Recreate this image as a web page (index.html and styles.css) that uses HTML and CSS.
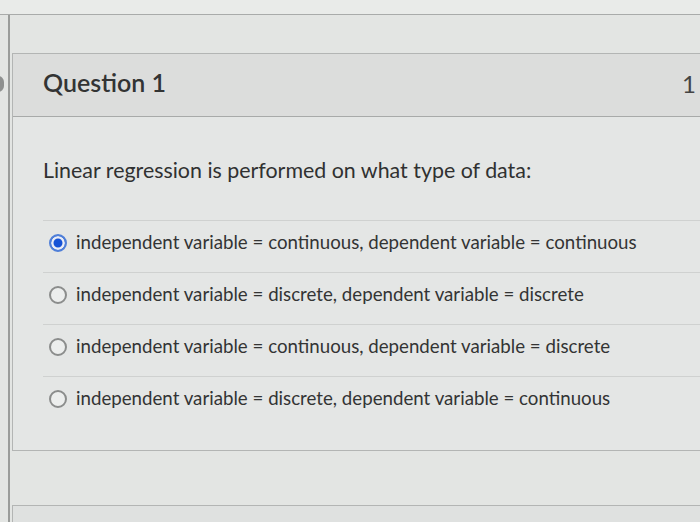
FILE: index.html
```html
<!DOCTYPE html>
<html>
<head>
<meta charset="utf-8">
<link rel="stylesheet" href="styles.css">
</head>
<body>
<div class="page">
  <div class="topbar"></div>
  <div class="card">
    <div class="card-head">
      <span class="chev"></span>
      <h2 class="title">Question 1</h2>
      <span class="pts">1</span>
    </div>
    <div class="card-body">
      <p class="question">Linear regression is performed on what type of data:</p>
      <ul class="answers">
        <li class="answer"><span class="radio checked"></span><span class="label">independent variable = continuous, dependent variable = continuous</span></li>
        <li class="answer"><span class="radio"></span><span class="label">independent variable = discrete, dependent variable = discrete</span></li>
        <li class="answer"><span class="radio"></span><span class="label">independent variable = continuous, dependent variable = discrete</span></li>
        <li class="answer"><span class="radio"></span><span class="label">independent variable = discrete, dependent variable = continuous</span></li>
      </ul>
    </div>
  </div>
  <div class="card next"></div>
</div>
</body>
</html>
```
FILE: styles.css
```css
html, body { margin: 0; padding: 0; }
body {
  width: 700px;
  height: 522px;
  overflow: hidden;
  background: #e3e5e3;
  font-family: Lato, "Noto Sans", sans-serif;
  color: #2e2f2f;
}
.page {
  height: 522px;
  border-left: 2px solid #9a9c9a;
  margin-left: 8px;
  box-sizing: border-box;
}
.topbar {
  height: 14px;
  background: #e9ebe9;
  border-bottom: 1px solid #a9abaa;
  margin-left: -10px;
}
.card {
  margin-top: 38px;
  margin-left: 2px;
  border: 1px solid #b3b5b4;
  border-right: none;
  background: #e4e6e5;
}
.card-head {
  height: 62px;
  background: #dcdddc;
  border-bottom: 1px solid #a8aaa9;
  display: flex;
  align-items: center;
  position: relative;
}
.chev {
  position: absolute;
  left: -15px;
  top: 22px;
  width: 6px;
  height: 16px;
  border-radius: 0 8px 8px 0;
  background: #8e908f;
}
.title {
  margin: 0 0 0 30px;
  font-size: 25px;
  font-weight: 600;
  color: #333434;
  flex: 1;
  position: relative;
  top: -3px;
}
.pts {
  font-size: 24px;
  color: #444;
  margin-right: 4px;
  position: relative;
  top: -2px;
}
.card-body {
  padding: 40px 0 22px 30px;
}
.question {
  margin: 0 0 37px 0;
  font-size: 21.4px;
  color: #303131;
}
.answers {
  list-style: none;
  margin: 0;
  padding: 0;
}
.answer {
  border-top: 1px solid #cfd1d0;
  display: flex;
  align-items: flex-start;
  padding-left: 6px;
  padding-top: 10px;
  box-sizing: border-box;
  height: 52px;
}
.radio {
  width: 14px;
  height: 14px;
  border: 2px solid #8b8d8c;
  border-radius: 50%;
  margin-right: 9px;
  flex: none;
  background: #eceeed;
  position: relative;
  top: 3px;
}
.radio.checked {
  border-color: #4f7fd8;
  background: #1552d6;
  box-shadow: inset 0 0 0 2.5px #e9ecf5;
}
.label {
  font-size: 18.7px;
  color: #333434;
}
.next {
  margin-top: 54px;
  height: 40px;
  background: #dfe1e0;
}
```
